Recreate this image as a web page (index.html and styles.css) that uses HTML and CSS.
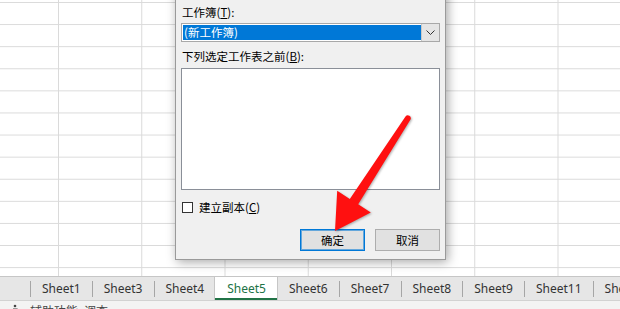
FILE: index.html
```html
<!DOCTYPE html>
<html lang="zh-CN">
<head>
    <meta charset="UTF-8">
    <title>移动或复制工作表</title>
    <link rel="stylesheet" href="styles.css">
</head>
<body>
    <!-- Worksheet grid -->
    <div class="sheet">

        <!-- Move or copy dialog -->
        <div class="dialog">
            <div class="dlg-label">工作簿(<u>T</u>):</div>
            <div class="combo">
                <div class="combo-value">(新工作簿)</div>
                <div class="combo-btn">
                    <svg width="9" height="5" viewBox="0 0 9 5"><path d="M0.5 0.5 L4.5 4.5 L8.5 0.5" fill="none" stroke="#333" stroke-width="1"/></svg>
                </div>
            </div>
            <div class="dlg-label second">下列选定工作表之前(<u>B</u>):</div>
            <div class="listbox"></div>
            <label class="check-row">
                <span class="checkbox"></span>
                <span>建立副本(<u>C</u>)</span>
            </label>
            <div class="buttons">
                <button class="btn default">确定</button>
                <button class="btn">取消</button>
            </div>
        </div>
    </div>

    <!-- Sheet tabs -->
    <div class="tabbar">
        <div class="tab"><span>Sheet1</span></div>
        <div class="tab"><span>Sheet3</span></div>
        <div class="tab"><span>Sheet4</span></div>
        <div class="tab active"><span>Sheet5</span></div>
        <div class="tab after-active"><span>Sheet6</span></div>
        <div class="tab"><span>Sheet7</span></div>
        <div class="tab"><span>Sheet8</span></div>
        <div class="tab"><span>Sheet9</span></div>
        <div class="tab"><span>Sheet11</span></div>
        <div class="tab"><span>Sheet12</span></div>
    </div>

    <!-- Status bar -->
    <div class="statusbar">
        <svg width="12" height="12" viewBox="0 0 12 12"><circle cx="3" cy="2" r="1.3" fill="#444"/><path d="M1 5 L5 5 L5 11 M3 7 L8 7 L10 11" fill="none" stroke="#444" stroke-width="1.2"/></svg>
        <span>辅助功能: 调查</span>
    </div>

    <!-- Red annotation arrow -->
    <svg class="arrow" width="620" height="309" viewBox="0 0 620 309">
        <path d="M405.5 116.4 L349.8 198.9 L337.2 190.7 L335 231 L370.8 212.5 L358.2 204.3 L410.5 119.6 A3 3 0 0 0 405.5 116.4 Z" fill="#ff1010"/>
    </svg>
</body>
</html>
```

FILE: styles.css
```css
/* Page */
html, body {
    margin: 0;
    height: 100%;
}

body {
    width: 620px;
    height: 309px;
    overflow: hidden;
    display: flex;
    flex-direction: column;
    position: relative;
    font-family: "Noto Sans", "Noto Sans CJK SC", sans-serif;
    color: #000;
}

/* Worksheet grid */
.sheet {
    height: 276px;
    flex-shrink: 0;
    position: relative;
    background-color: #ffffff;
    background-image:
        linear-gradient(to right, #dadada 1px, transparent 1px),
        linear-gradient(to bottom, #dadada 1px, transparent 1px);
    background-size: 83.25px 22.1px;
    background-position: 58px 2px;
}

/* Dialog */
.dialog {
    position: absolute;
    left: 175px;
    top: -12px;
    width: 259px;
    padding: 16px 5px 8px 5px;
    background: #f0f0f0;
    border: 1px solid #9a9a9a;
    box-shadow: 2px 2px 10px rgba(0, 0, 0, 0.35);
    display: flex;
    flex-direction: column;
    font-family: "Noto Sans CJK SC", sans-serif;
    font-size: 11.5px;
}

.dlg-label {
    line-height: 14px;
    margin-left: 1px;
}

    .dlg-label.second {
        margin-top: 7px;
    }

u {
    text-decoration-thickness: 1px;
    text-underline-offset: 1px;
}

.combo {
    margin-top: 4px;
    height: 19px;
    box-sizing: border-box;
    border: 1px solid #a8a8a8;
    background: #ffffff;
    display: flex;
    padding: 1px 0 1px 1px;
}

.combo-value {
    flex: 1;
    background: #0078d7;
    color: #ffffff;
    line-height: 15px;
    padding-left: 1px;
}

.combo-btn {
    width: 17px;
    margin-top: -1px;
    margin-bottom: -1px;
    background: #e5e5e5;
    border-left: 1px solid #c8c8c8;
    display: flex;
    align-items: center;
    justify-content: center;
}

.listbox {
    margin-top: 5px;
    height: 122px;
    box-sizing: border-box;
    border: 1px solid #8a8f98;
    background: #ffffff;
}

.check-row {
    margin-top: 10px;
    display: flex;
    align-items: center;
    gap: 6px;
    line-height: 14px;
    margin-left: 1px;
}

.checkbox {
    width: 11px;
    height: 11px;
    box-sizing: border-box;
    border: 1px solid #333333;
    background: #ffffff;
}

.buttons {
    margin-top: 15px;
    display: flex;
    justify-content: flex-end;
    gap: 10px;
}

.btn {
    width: 65px;
    height: 22px;
    padding: 0;
    font-family: "Noto Sans CJK SC", sans-serif;
    font-size: 11.5px;
    color: #000;
    background: #e1e1e1;
    border: 1px solid #adadad;
}

    .btn.default {
        border-color: #0078d7;
        box-shadow: inset 0 0 0 1px rgba(0, 120, 215, 0.55);
    }

/* Sheet tabs */
.tabbar {
    height: 25px;
    box-sizing: border-box;
    flex-shrink: 0;
    background: #e6e6e6;
    border-top: 1px solid #c6c6c6;
    border-bottom: 1px solid #d2d2d2;
    display: flex;
    padding-left: 30px;
    font-size: 12px;
    color: #333;
    white-space: nowrap;
}

.tab {
    padding: 4px 0 3px;
    flex-shrink: 0;
}

    .tab span {
        display: block;
        line-height: 16px;
        padding: 0 11px;
        border-left: 1px solid #a6a6a6;
    }

    .tab.active {
        background: #ffffff;
        color: #217346;
        padding-bottom: 1px;
        border-bottom: 2px solid #217346;
        box-shadow: -1px 0 0 #c6c6c6, 1px 0 0 #c6c6c6;
    }

        .tab.active span,
        .tab.after-active span {
            border-left-color: transparent;
        }

/* Status bar */
.statusbar {
    flex: 1;
    background: #f3f3f3;
    display: flex;
    align-items: flex-start;
    gap: 6px;
    padding: 3px 0 0 12px;
    font-family: "Noto Sans CJK SC", sans-serif;
    font-size: 12px;
    line-height: 14px;
    color: #444;
}

/* Annotation arrow */
.arrow {
    position: absolute;
    left: 0;
    top: 0;
    pointer-events: none;
    filter: drop-shadow(1px 1px 1px rgba(0, 0, 0, 0.3));
}
```
